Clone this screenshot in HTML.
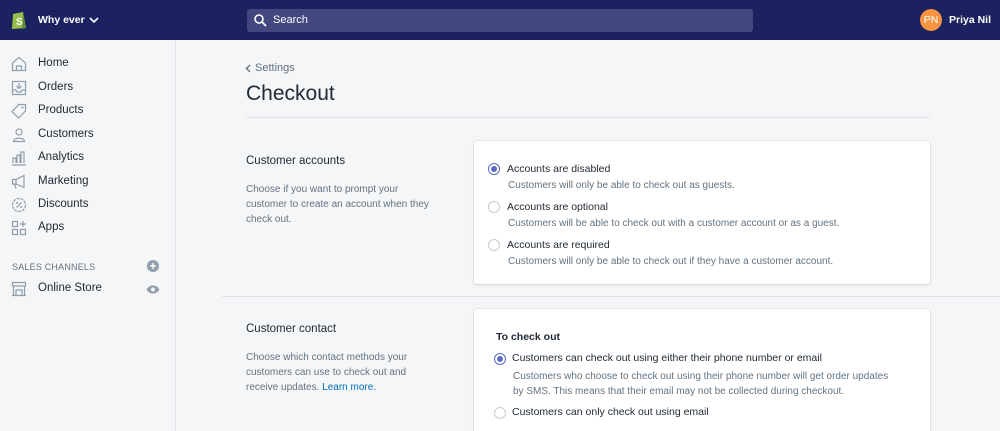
<!DOCTYPE html>
<html style="width:1000px;height:431px;overflow:hidden"><head><style>
*{box-sizing:border-box;margin:0;padding:0}
body{width:1000px;height:431px;overflow:hidden;background:#f4f6f8;font-family:"Liberation Sans",sans-serif;color:#212b36;position:relative}
.top{position:absolute;left:0;top:0;width:1000px;height:40px;background:#1c2260}
.abs{position:absolute}
.side{position:absolute;left:0;top:40px;width:176px;height:391px;background:#f4f6f8;border-right:1px solid #dfe3e8}
.nav{position:absolute;left:38px;font-size:11.5px;color:#212b36}
.ic{position:absolute;left:11px;width:16px;height:16px}
.card{position:absolute;background:#fff;border-radius:3px;box-shadow:0 0 0 1px rgba(63,63,68,.05),0 1px 3px rgba(63,63,68,.15)}
.rad{position:absolute;width:12px;height:12px;border-radius:50%;border:1px solid #c4cdd5;background:#fff}
.rad.on{border-color:#5c6ac4}
.rad.on:after{content:"";position:absolute;left:2px;top:2px;width:6px;height:6px;border-radius:50%;background:#5c6ac4}
.t{position:absolute;font-size:10.5px;color:#212b36;white-space:nowrap}
.s{position:absolute;font-size:10px;color:#637381;white-space:nowrap}
</style></head><body>
<div class="top">
 <svg class="abs" style="left:11px;top:9px" width="16" height="21" viewBox="0 0 16 21"><path d="M2 5 L12 3 L15 19 L1 20 Z" fill="#95bf47"/><path d="M12 3 L15 19 L11 20Z" fill="#5e8e3e"/><text x="5" y="16" font-size="10" font-weight="bold" fill="#fff" font-family="Liberation Sans">S</text></svg>
 <div class="abs" style="left:38px;top:14px;color:#fff;font-size:10.5px;font-weight:bold">Why ever</div>
 <svg class="abs" style="left:89px;top:17px" width="10" height="7"><path d="M1 1 L5 5 L9 1" stroke="#fff" stroke-width="1.6" fill="none"/></svg>
 <div class="abs" style="left:247px;top:9px;width:506px;height:23px;background:#43467f;border-radius:3px"></div>
 <svg class="abs" style="left:254px;top:14px" width="13" height="13"><circle cx="5" cy="5" r="4" stroke="#fff" stroke-width="1.6" fill="none"/><path d="M8 8 L12 12" stroke="#fff" stroke-width="1.8"/></svg>
 <div class="abs" style="left:273px;top:14px;color:#fff;font-size:11px">Search</div>
 <div class="abs" style="left:920px;top:9px;width:22px;height:22px;border-radius:50%;background:#f49342;color:#fff;font-size:10.5px;line-height:22px;text-align:center">PN</div>
 <div class="abs" style="left:949px;top:14px;color:#fff;font-size:10.5px;font-weight:bold">Priya Nil</div>
</div>
<div class="side">
 <svg class="ic" style="top:16px" viewBox="0 0 16 16"><path d="M1.5 7 L8 1.5 L14.5 7 V14.5 H1.5Z M5.5 14.5 V10 H10.5 V14.5" fill="none" stroke="#919eab" stroke-width="1.2"/></svg>
 <div class="nav" style="top:17px">Home</div>
 <svg class="ic" style="top:40px" viewBox="0 0 16 16"><path d="M1.5 1.5 H14.5 V14.5 H1.5Z M1.5 10 H5 L6 12 H10 L11 10 H14.5 M8 3 V8 M5.5 6 L8 8.5 L10.5 6" fill="none" stroke="#919eab" stroke-width="1.2"/></svg>
 <div class="nav" style="top:41px">Orders</div>
 <svg class="ic" style="top:63px" viewBox="0 0 16 16"><path d="M8 1.5 H14.5 V8 L7.5 15 L1 8.5Z" fill="none" stroke="#919eab" stroke-width="1.2"/><circle cx="11.5" cy="4.5" r="1" fill="#919eab"/></svg>
 <div class="nav" style="top:64px">Products</div>
 <svg class="ic" style="top:87px" viewBox="0 0 16 16"><circle cx="8" cy="5" r="3" fill="none" stroke="#919eab" stroke-width="1.2"/><path d="M2.5 14.5 C2.5 10 13.5 10 13.5 14.5Z" fill="none" stroke="#919eab" stroke-width="1.2"/></svg>
 <div class="nav" style="top:88px">Customers</div>
 <svg class="ic" style="top:110px" viewBox="0 0 16 16"><path d="M1 15 H15 M2 13 V8 H5 V13 M6 13 V5 H9 V13 M10 13 V2 H13 V13" fill="none" stroke="#919eab" stroke-width="1.2"/></svg>
 <div class="nav" style="top:111px">Analytics</div>
 <svg class="ic" style="top:134px" viewBox="0 0 16 16"><path d="M1.5 5.5 H5 L13 1.5 V13.5 L5 10 H1.5Z M5 5.5 V10 M3.5 10 L5 14.5" fill="none" stroke="#919eab" stroke-width="1.2"/></svg>
 <div class="nav" style="top:135px">Marketing</div>
 <svg class="ic" style="top:157px" viewBox="0 0 16 16"><circle cx="8" cy="8" r="6.5" fill="none" stroke="#919eab" stroke-width="1.2" stroke-dasharray="3 1"/><path d="M5.5 10.5 L10.5 5.5" stroke="#919eab" stroke-width="1.2"/><circle cx="6" cy="6" r="1" fill="#919eab"/><circle cx="10" cy="10" r="1" fill="#919eab"/></svg>
 <div class="nav" style="top:158px">Discounts</div>
 <svg class="ic" style="top:180px" viewBox="0 0 16 16"><path d="M1.5 1.5 H6.5 V6.5 H1.5Z M1.5 9.5 H6.5 V14.5 H1.5Z M9.5 9.5 H14.5 V14.5 H9.5Z M12 1 V7 M9 4 H15" fill="none" stroke="#919eab" stroke-width="1.2"/></svg>
 <div class="nav" style="top:181px">Apps</div>
 <div class="abs" style="left:12px;top:222px;font-size:9px;color:#637381;letter-spacing:.2px">SALES CHANNELS</div>
 <div class="abs" style="left:147px;top:220px;width:12px;height:12px;border-radius:50%;background:#919eab;color:#fff;font-size:12px;line-height:12px;text-align:center;font-weight:bold">+</div>
 <svg class="ic" style="top:241px" viewBox="0 0 16 16"><path d="M1.5 1.5 H14.5 V5 H1.5Z M2.5 5 V14.5 H13.5 V5 M5 14.5 V9 H11 V14.5 M1 14.5 H15" fill="none" stroke="#919eab" stroke-width="1.2"/></svg>
 <div class="nav" style="top:242px">Online Store</div>
 <svg class="abs" style="left:146px;top:245px" width="14" height="9" viewBox="0 0 14 9"><path d="M0.5 4.5 C4 -1 10 -1 13.5 4.5 C10 10 4 10 0.5 4.5Z" fill="#919eab"/><circle cx="7" cy="4.5" r="2" fill="#f4f6f8"/></svg>
</div>
<svg class="abs" style="left:245px;top:64px" width="6" height="9"><path d="M5 1 L1.5 4.5 L5 8" stroke="#637381" stroke-width="1.4" fill="none"/></svg>
<div class="abs" style="left:255px;top:62px;font-size:11px;color:#637381">Settings</div>
<div class="abs" style="left:246px;top:82px;font-size:21px;color:#212b36">Checkout</div>
<div class="abs" style="left:246px;top:117px;width:684px;height:1px;background:#dfe3e8"></div>
<div class="abs" style="left:246px;top:155px;font-size:11.5px">Customer accounts</div>
<div class="abs" style="left:246px;top:182px;font-size:10px;color:#637381;line-height:15px;width:185px">Choose if you want to prompt your customer to create an account when they check out.</div>
<div class="card" style="left:474px;top:141px;width:456px;height:143px">
 <div class="rad on" style="left:14px;top:22px"></div><div class="t" style="left:33px;top:22px">Accounts are disabled</div>
 <div class="s" style="left:34px;top:39px">Customers will only be able to check out as guests.</div>
 <div class="rad" style="left:14px;top:60px"></div><div class="t" style="left:33px;top:60px">Accounts are optional</div>
 <div class="s" style="left:34px;top:77px">Customers will be able to check out with a customer account or as a guest.</div>
 <div class="rad" style="left:14px;top:98px"></div><div class="t" style="left:33px;top:98px">Accounts are required</div>
 <div class="s" style="left:34px;top:115px">Customers will only be able to check out if they have a customer account.</div>
</div>
<div class="abs" style="left:222px;top:296px;width:778px;height:1px;background:#dfe3e8"></div>
<div class="abs" style="left:246px;top:323px;font-size:11.5px">Customer contact</div>
<div class="abs" style="left:246px;top:350px;font-size:10px;color:#637381;line-height:15px;width:185px">Choose which contact methods your customers can use to check out and receive updates. <span style="color:#006fbb">Learn more.</span></div>
<div class="card" style="left:474px;top:309px;width:456px;height:140px">
 <div class="t" style="left:22px;top:22px;font-weight:bold">To check out</div>
 <div class="rad on" style="left:20px;top:44px"></div><div class="t" style="left:38px;top:43px">Customers can check out using either their phone number or email</div>
 <div class="s" style="left:39px;top:61px;line-height:14.5px">Customers who choose to check out using their phone number will get order updates<br>by SMS. This means that their email may not be collected during checkout.</div>
 <div class="rad" style="left:20px;top:98px"></div><div class="t" style="left:38px;top:97px">Customers can only check out using email</div>
</div>
</body></html>
